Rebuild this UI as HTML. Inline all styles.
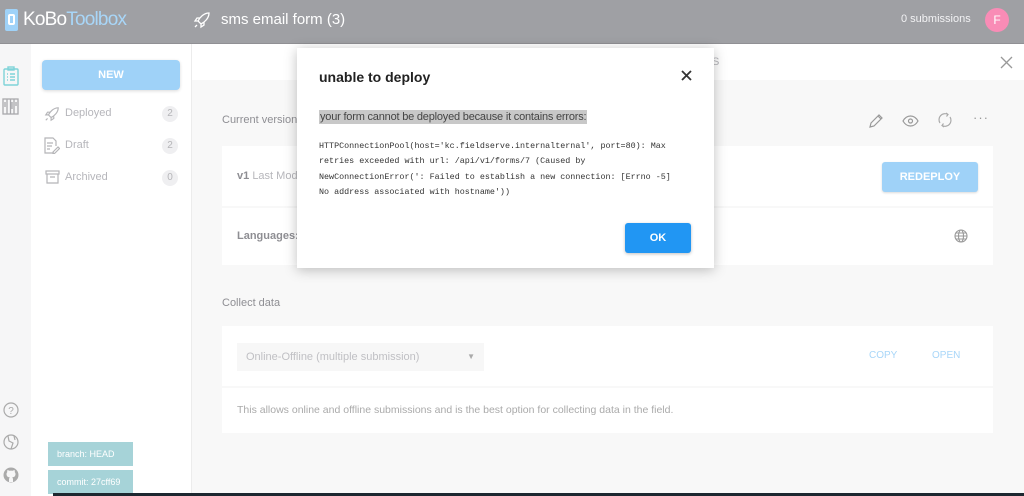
<!DOCTYPE html>
<html><head><style>
*{box-sizing:border-box;margin:0;padding:0}
body{width:1024px;height:496px;overflow:hidden;font-family:"Liberation Sans",sans-serif;background:#f8f8f8;position:relative}
.abs{position:absolute}
.top{left:0;top:0;width:1024px;height:44px;background:#9fa0a4;border-bottom:1px solid #909094}
.rail{left:0;top:44px;width:31px;height:452px;background:#f6f6f7}
.side{left:31px;top:44px;width:161px;height:452px;background:#fff;border-right:1px solid #ececec}
.hdr{left:192px;top:44px;width:832px;height:36px;background:#fff}
.card{background:#fff}
.g{color:#b6b6bb}
.badge{width:16px;height:16px;border-radius:8px;background:#efeff1;color:#b5b5b8;font-size:10px;text-align:center;line-height:16px}
.modal{left:297px;top:48px;width:417px;height:220px;background:#fff;box-shadow:0 2px 12px rgba(0,0,0,.25)}
</style></head><body>
<div class="abs top"></div>
<div class="abs" style="left:5px;top:9px;width:13px;height:22px;background:#9fd2f8;border-radius:2px"></div>
<div class="abs" style="left:8px;top:14px;width:7px;height:11px;border:2px solid #fff;border-radius:2px"></div>
<div class="abs" style="left:23px;top:9px;font-size:19px;color:#fff;letter-spacing:-0.8px">KoBo<span style="color:#a8d6f8">Toolbox</span></div>
<svg class="abs" style="left:193px;top:11px" width="18" height="18" viewBox="0 0 18 18" fill="none" stroke="#fff" stroke-width="1.3"><path d="M16 2 C11 2 7 6 5 10 L8 13 C12 11 16 7 16 2Z M5 10 L2 10 L4 7 L7 7 M8 13 L8 16 L11 14 L11 11 M4 14 L2 16"/></svg>
<div class="abs" style="left:221px;top:11px;font-size:15px;color:#fff">sms email form (3)</div>
<div class="abs" style="left:901px;top:13px;font-size:11px;color:#f2f2f4">0 submissions</div>
<div class="abs" style="left:985px;top:8px;width:24px;height:24px;border-radius:12px;background:#f98cb6;color:#fff;font-size:12px;text-align:center;line-height:24px">F</div>

<div class="abs rail"></div>
<svg class="abs" style="left:3px;top:66px" width="16" height="20" viewBox="0 0 16 20" fill="none" stroke="#7ed3d8" stroke-width="1.4"><rect x="1" y="3" width="14" height="16" rx="1"/><rect x="5" y="1" width="6" height="3"/><path d="M4 8h1M7 8h5M4 11h1M7 11h5M4 14h1M7 14h5"/></svg>
<svg class="abs" style="left:2px;top:98px" width="17" height="17" viewBox="0 0 17 17" fill="none" stroke="#a8a8ac" stroke-width="1.3"><rect x="1" y="1" width="15" height="15"/><path d="M5 1v15M8.5 1v15M12 1v15M3 4v5M10 4v7M14 4v4"/></svg>
<svg class="abs" style="left:3px;top:402px" width="16" height="16" viewBox="0 0 16 16" fill="none" stroke="#aaa" stroke-width="1.2"><circle cx="8" cy="8" r="7"/><text x="8" y="12" font-size="10" text-anchor="middle" fill="#aaa" stroke="none" font-family="Liberation Sans">?</text></svg>
<svg class="abs" style="left:3px;top:434px" width="16" height="16" viewBox="0 0 16 16" fill="none" stroke="#aaa" stroke-width="1.2"><circle cx="8" cy="8" r="7"/><path d="M5 2 L6 7 L10 9 L8 15 M11 2 L12 6"/></svg>
<svg class="abs" style="left:3px;top:467px" width="16" height="16" viewBox="0 0 16 16"><circle cx="8" cy="8" r="7.5" fill="#aaa"/><path d="M6 15v-3c0-1 1-1.5 1-1.5-2-.3-3.5-1-3.5-3.5 0-.8.3-1.4.8-1.9-.1-.3-.3-1 .1-2 0 0 .7-.2 2 .7a7 7 0 0 1 3.2 0c1.3-.9 2-.7 2-.7.4 1 .2 1.7.1 2 .5.5.8 1.1.8 1.9 0 2.5-1.5 3.2-3.5 3.5 0 0 1 .5 1 1.5v3z" fill="#f6f6f7"/></svg>

<div class="abs side"></div>
<div class="abs" style="left:42px;top:60px;width:138px;height:30px;background:#9fd2f8;border-radius:4px;box-shadow:0 1px 3px rgba(0,0,0,.15);color:#fff;font-weight:bold;font-size:11px;text-align:center;line-height:30px">NEW</div>
<svg class="abs" style="left:44px;top:106px" width="16" height="16" viewBox="0 0 18 18" fill="none" stroke="#b5b5b8" stroke-width="1.3"><path d="M16 2 C11 2 7 6 5 10 L8 13 C12 11 16 7 16 2Z M5 10 L2 10 L4 7 L7 7 M8 13 L8 16 L11 14 L11 11 M4 14 L2 16"/></svg>
<div class="abs g" style="left:65px;top:107px;font-size:11px">Deployed</div>
<div class="abs badge" style="left:162px;top:106px">2</div>
<svg class="abs" style="left:44px;top:137px" width="16" height="17" viewBox="0 0 16 17" fill="none" stroke="#b5b5b8" stroke-width="1.2"><path d="M10 16H1V1h8l3 3v5M3 6h6M3 9h5M3 12h3M9 15l5-5 1.5 1.5-5 5H9z"/></svg>
<div class="abs g" style="left:65px;top:139px;font-size:11px">Draft</div>
<div class="abs badge" style="left:162px;top:138px">2</div>
<svg class="abs" style="left:45px;top:170px" width="15" height="14" viewBox="0 0 15 14" fill="none" stroke="#b5b5b8" stroke-width="1.2"><rect x="1" y="1" width="13" height="3"/><path d="M2 4v9h11V4M5 7h5"/></svg>
<div class="abs g" style="left:65px;top:171px;font-size:11px">Archived</div>
<div class="abs badge" style="left:162px;top:170px">0</div>
<div class="abs" style="left:48px;top:442px;width:85px;height:24px;background:#a6d3d8;color:#fff;font-size:9px;line-height:24px;padding-left:9px">branch: HEAD</div>
<div class="abs" style="left:48px;top:470px;width:85px;height:24px;background:#a6d3d8;color:#fff;font-size:9px;line-height:24px;padding-left:9px">commit: 27cff69</div>

<div class="abs hdr"></div>
<div class="abs g" style="left:712px;top:56px;font-size:11px">S</div>
<svg class="abs" style="left:1000px;top:56px" width="13" height="13" viewBox="0 0 13 13" stroke="#999" stroke-width="1.3"><path d="M1 1l11 11M12 1L1 12"/></svg>

<div class="abs" style="left:222px;top:114px;font-size:11px;color:#8e8e93">Current version</div>
<svg class="abs" style="left:868px;top:113px" width="16" height="16" viewBox="0 0 16 16" fill="none" stroke="#999" stroke-width="1.2"><path d="M2 14l1-4 8-8 3 3-8 8zM10 3l3 3"/></svg>
<svg class="abs" style="left:902px;top:115px" width="17" height="12" viewBox="0 0 17 12" fill="none" stroke="#999" stroke-width="1.2"><path d="M1 6c2-3.5 4.5-5 7.5-5s5.5 1.5 7.5 5c-2 3.5-4.5 5-7.5 5S3 9.5 1 6z"/><circle cx="8.5" cy="6" r="2"/></svg>
<svg class="abs" style="left:937px;top:112px" width="16" height="16" viewBox="0 0 16 16" fill="none" stroke="#aaa" stroke-width="1.2"><path d="M3 11A6 6 0 0 1 11 2.5M13 5a6 6 0 0 1-8 8.5M9 1l2 1.5-1.5 2M7 15l-2-1.5 1.5-2"/></svg>
<div class="abs" style="left:973px;top:110px;font-size:13px;color:#999;letter-spacing:1px">···</div>

<div class="abs card" style="left:222px;top:146px;width:771px;height:60px"></div>
<div class="abs" style="left:237px;top:170px;font-size:11px;color:#8e8e93"><b>v1</b> <span class="g">Last Mod</span></div>
<div class="abs" style="left:882px;top:162px;width:96px;height:30px;background:#9fd2f8;border-radius:3px;color:#fff;font-weight:bold;font-size:11px;text-align:center;line-height:30px;box-shadow:0 1px 2px rgba(0,0,0,.15)">REDEPLOY</div>
<div class="abs card" style="left:222px;top:208px;width:771px;height:57px"></div>
<div class="abs" style="left:237px;top:230px;font-size:11px;color:#8e8e93;font-weight:bold">Languages: </div>
<svg class="abs" style="left:954px;top:229px" width="14" height="14" viewBox="0 0 14 14" fill="none" stroke="#999" stroke-width="1.1"><circle cx="7" cy="7" r="6"/><ellipse cx="7" cy="7" rx="2.5" ry="6"/><path d="M1 7h12M2 4h10M2 10h10"/></svg>

<div class="abs" style="left:222px;top:297px;font-size:11px;color:#8e8e93">Collect data</div>
<div class="abs card" style="left:222px;top:326px;width:771px;height:60px"></div>
<div class="abs" style="left:237px;top:343px;width:247px;height:28px;background:#f7f7f7;font-size:11px;line-height:28px;padding-left:9px;color:#c0c0c4">Online-Offline (multiple submission)<span style="position:absolute;right:9px;font-size:8px;color:#aaa">▼</span></div>
<div class="abs" style="left:869px;top:350px;font-size:10px;color:#a8d6f8">COPY</div>
<div class="abs" style="left:932px;top:350px;font-size:10px;color:#a8d6f8">OPEN</div>
<div class="abs card" style="left:222px;top:388px;width:771px;height:45px"></div>
<div class="abs g" style="left:237px;top:404px;font-size:10.5px;color:#aaa">This allows online and offline submissions and is the best option for collecting data in the field.</div>
<div class="abs" style="left:53px;top:493px;width:971px;height:3px;background:#1d2730"></div>

<div class="abs modal"></div>
<div class="abs" style="left:319px;top:69px;font-size:14px;color:#222;font-weight:bold">unable to deploy</div>
<svg class="abs" style="left:681px;top:70px" width="11" height="11" viewBox="0 0 11 11" stroke="#333" stroke-width="1.8"><path d="M1 1l9 9M10 1L1 10"/></svg>
<div class="abs" style="left:319px;top:110px;font-size:11px;letter-spacing:-0.2px;color:#444;background:#c8c8c8;padding:0 1px;line-height:14px">your form cannot be deployed because it contains errors:</div>
<div class="abs" style="left:319px;top:139px;font-family:'Liberation Mono',monospace;font-size:8.4px;line-height:15.3px;color:#333;white-space:pre">HTTPConnectionPool(host='kc.fieldserve.internalternal', port=80): Max
retries exceeded with url: /api/v1/forms/7 (Caused by
NewConnectionError(': Failed to establish a new connection: [Errno -5]
No address associated with hostname'))</div>
<div class="abs" style="left:625px;top:223px;width:66px;height:30px;background:#2196f3;border-radius:3px;color:#fff;font-weight:bold;font-size:11px;text-align:center;line-height:30px;box-shadow:0 1px 3px rgba(0,0,0,.25)">OK</div>
</body></html>
